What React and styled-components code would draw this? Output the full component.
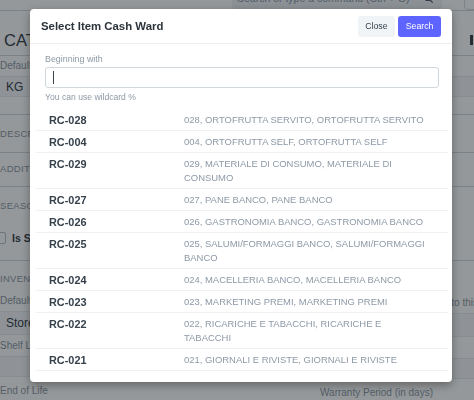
import React from "react";
import styled, { createGlobalStyle } from "styled-components";

const GlobalStyle = createGlobalStyle`
  html, body {
    margin: 0;
    padding: 0;
    background: #ffffff;
    overflow: hidden;
  }
  body {
    font-family: "Liberation Sans", Arial, sans-serif;
  }
`;

const ITEMS = [
  { code: "RC-028", desc: "028, ORTOFRUTTA SERVITO, ORTOFRUTTA SERVITO" },
  { code: "RC-004", desc: "004, ORTOFRUTTA SELF, ORTOFRUTTA SELF" },
  { code: "RC-029", desc: "029, MATERIALE DI CONSUMO, MATERIALE DI CONSUMO" },
  { code: "RC-027", desc: "027, PANE BANCO, PANE BANCO" },
  { code: "RC-026", desc: "026, GASTRONOMIA BANCO, GASTRONOMIA BANCO" },
  { code: "RC-025", desc: "025, SALUMI/FORMAGGI BANCO, SALUMI/FORMAGGI BANCO" },
  { code: "RC-024", desc: "024, MACELLERIA BANCO, MACELLERIA BANCO" },
  { code: "RC-023", desc: "023, MARKETING PREMI, MARKETING PREMI" },
  { code: "RC-022", desc: "022, RICARICHE E TABACCHI, RICARICHE E TABACCHI" },
  { code: "RC-021", desc: "021, GIORNALI E RIVISTE, GIORNALI E RIVISTE" },
];

const App = () => {
  return (
    <>
      <GlobalStyle />
      <Page>
        <Navbar>
          <NavSearch>
            <span>Search or type a command (Ctrl + G)</span>
            <SearchIcon viewBox="0 0 16 16">
              <circle cx="6.5" cy="6.5" r="4.5" />
              <path d="M10 10l4 4" />
            </SearchIcon>
          </NavSearch>
          <NavButton />
        </Navbar>
        <TitleBar>
          <PageTitle>CATEGORIA CASSA</PageTitle>
          <TitleAction />
        </TitleBar>

        <Section $top={4} $bottom={12}>
          <FieldLabel>Default Unit of Measure</FieldLabel>
          <Field>KG</Field>
        </Section>
        <Section $top={13} $bottom={12}>
          <SectionHead>DESCRIPTION</SectionHead>
        </Section>
        <Section $top={10} $bottom={11}>
          <SectionHead>ADDITIONAL INFORMATION</SectionHead>
        </Section>
        <Section $top={13} $bottom={16}>
          <SectionHead>SEASONALITY</SectionHead>
          <CheckRow>
            <CheckBox />
            <span>Is Seasonal</span>
          </CheckRow>
        </Section>
        <Section $top={12} $bottom={0}>
          <SectionHead>INVENTORY</SectionHead>
          <Columns>
            <div>
              <FieldLabel>Default Warehouse</FieldLabel>
              <Field $big>Stores</Field>
              <FieldLabel>Shelf Life In Days</FieldLabel>
              <Field />
              <FieldLabel $gap={8}>End of Life</FieldLabel>
            </div>
            <div>
              <Hint>Stock settings apply to this</Hint>
              <Field $big />
              <FieldLabel>&nbsp;</FieldLabel>
              <Field />
              <FieldLabel $gap={8}>Warranty Period (in days)</FieldLabel>
            </div>
          </Columns>
        </Section>
      </Page>

      <Backdrop />

      <Modal>
        <ModalHeader>
          <ModalTitle>Select Item Cash Ward</ModalTitle>
          <Actions>
            <Button>Close</Button>
            <Button $primary>Search</Button>
          </Actions>
        </ModalHeader>
        <ModalBody>
          <FormGroup>
            <ControlLabel>Beginning with</ControlLabel>
            <Input>
              <Caret />
            </Input>
            <HelpText>You can use wildcard %</HelpText>
          </FormGroup>
          <List>
            {ITEMS.map((item) => (
              <Row key={item.code}>
                <Code>{item.code}</Code>
                <Desc>{item.desc}</Desc>
              </Row>
            ))}
          </List>
        </ModalBody>
      </Modal>
    </>
  );
};

/* ---------- page behind the dialog ---------- */

const Page = styled.div`
  height: 414px;
  overflow: hidden;
  margin-top: -14px;
  color: #36414c;
  font-size: 11px;
`;

const Navbar = styled.div`
  height: 24px;
  display: flex;
  align-items: center;
  justify-content: flex-end;
  gap: 22px;
`;

const NavSearch = styled.div`
  width: 210px;
  height: 22px;
  box-sizing: border-box;
  padding: 0 8px 0 5px;
  background: #eef2f5;
  border-radius: 4px;
  display: flex;
  align-items: center;
  justify-content: space-between;
  color: #8d99a6;
  font-size: 10.5px;
`;

const SearchIcon = styled.svg`
  width: 11px;
  height: 11px;
  fill: none;
  stroke: #36414c;
  stroke-width: 1.6;
`;

const NavButton = styled.div`
  width: 20px;
  height: 22px;
  margin-right: -12px;
  border: 1px solid #d1d8dd;
  border-radius: 4px;
`;

const TitleBar = styled.div`
  height: 45px;
  box-sizing: border-box;
  padding: 19px 0 0 4px;
  display: flex;
  align-items: flex-start;
  justify-content: space-between;
  border-top: 1px solid #d1d8dd;
`;

const PageTitle = styled.h1`
  margin: 0;
  font-size: 16.5px;
  line-height: 20px;
  font-weight: 400;
  color: #36414c;
`;

const TitleAction = styled.div`
  width: 3px;
  height: 10px;
  margin: 5px 1px 0 0;
  background: #36414c;
`;

const Section = styled.div`
  padding: ${(p) => p.$top}px 0 ${(p) => p.$bottom}px;
  border-top: 1px solid #d1d8dd;
`;

const SectionHead = styled.div`
  font-size: 9.5px;
  line-height: 12px;
  letter-spacing: 0.3px;
  color: #8d99a6;
`;

const FieldLabel = styled.div`
  font-size: 10px;
  line-height: 12px;
  color: #8d99a6;
  margin: ${(p) => (p.$gap ? `${p.$gap}px` : "0")} 0 4px;
  white-space: nowrap;
`;

const Hint = styled(FieldLabel)`
  text-align: right;
  margin-right: -4px;
  margin-top: 2px;
`;

const Field = styled.div`
  height: ${(p) => (p.$big ? "24px" : "21px")};
  box-sizing: border-box;
  margin: 0 0 5px -4px;
  padding: 0 10px;
  background: #f5f7fa;
  border-top: 1px solid #e6eaed;
  border-bottom: 1px solid #e6eaed;
  display: flex;
  align-items: center;
  font-size: 12px;
  color: #36414c;
`;

const CheckRow = styled.div`
  margin-top: 20px;
  height: 12px;
  display: flex;
  align-items: center;
  gap: 6px;
  font-size: 10.5px;
  font-weight: 700;
  color: #36414c;
`;

const CheckBox = styled.span`
  width: 10px;
  height: 10px;
  margin-left: -6px;
  border: 1px solid #b8c2cc;
  border-radius: 2px;
  background: #fff;
`;

const Columns = styled.div`
  display: grid;
  grid-template-columns: 320px 1fr;
  margin-top: 10px;
`;

const Backdrop = styled.div`
  position: fixed;
  inset: 0;
  background: rgba(10, 16, 22, 0.43);
`;

/* ---------- dialog ---------- */

const Modal = styled.div`
  position: fixed;
  left: 30px;
  top: 9px;
  width: 422px;
  background: #ffffff;
  border-radius: 4px;
  box-shadow: 0 3px 8px rgba(0, 0, 0, 0.35);
  overflow: hidden;
`;

const ModalHeader = styled.div`
  height: 35px;
  box-sizing: border-box;
  padding: 0 11px;
  display: flex;
  align-items: center;
  justify-content: space-between;
  border-bottom: 1px solid #ebeff2;
`;

const ModalTitle = styled.h4`
  margin: 0;
  font-size: 11.4px;
  font-weight: 700;
  color: #2b333b;
`;

const Actions = styled.div`
  display: flex;
  gap: 3px;
`;

const Button = styled.button`
  height: 21px;
  padding: 0 7.5px;
  border: none;
  border-radius: 3px;
  font-family: inherit;
  font-size: 8.8px;
  background: ${(p) => (p.$primary ? "#5e64ff" : "#f0f4f7")};
  color: ${(p) => (p.$primary ? "#ffffff" : "#36414c")};
`;

const ModalBody = styled.div`
  padding: 9px 4px 11px 6px;
`;

const FormGroup = styled.div`
  padding: 0 9px;
`;

const ControlLabel = styled.div`
  font-size: 8.9px;
  line-height: 12px;
  color: #8d99a6;
  margin-bottom: 2px;
`;

const Input = styled.div`
  height: 21px;
  box-sizing: border-box;
  border: 1px solid #d1d8dd;
  border-radius: 3px;
  display: flex;
  align-items: center;
  padding-left: 7px;
`;

const Caret = styled.span`
  width: 1px;
  height: 13px;
  background: #36414c;
`;

const HelpText = styled.div`
  font-size: 8.6px;
  line-height: 12px;
  color: #8d99a6;
  margin-top: 3px;
`;

const List = styled.div`
  margin-top: 6px;
`;

const Row = styled.div`
  display: grid;
  grid-template-columns: 135px 246px;
  padding: 3.5px 13px;
  line-height: 14px;
  border-bottom: 1px solid #eef1f4;
`;

const Code = styled.div`
  font-size: 10.9px;
  font-weight: 700;
  color: #36414c;
`;

const Desc = styled.div`
  font-size: 9.45px;
  color: #8d99a6;
`;

export default App;
